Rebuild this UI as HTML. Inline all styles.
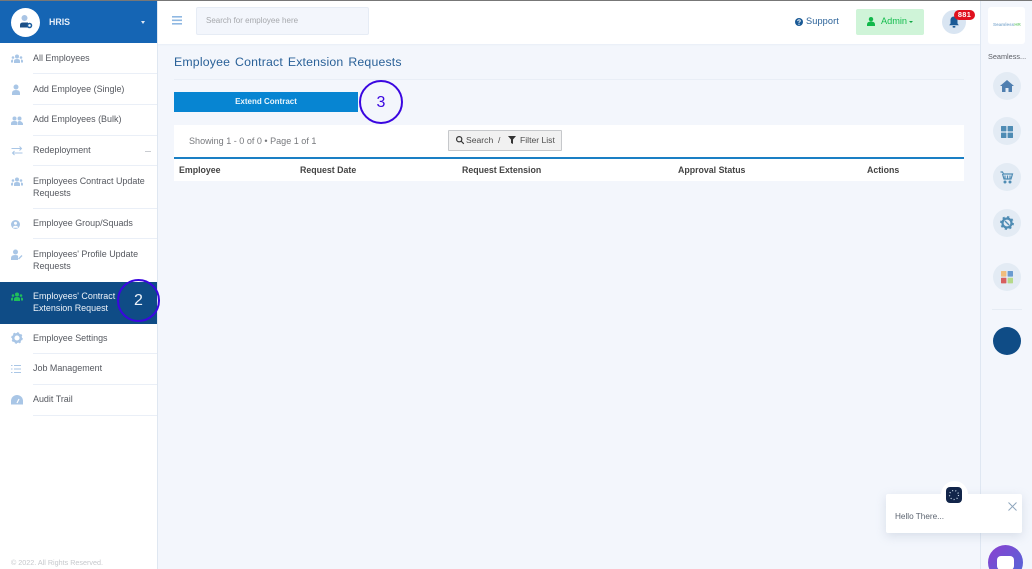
<!DOCTYPE html>
<html><head><meta charset="utf-8">
<style>
html,body{margin:0;padding:0;width:1032px;height:569px;overflow:hidden;background:#f3f6fc}
#w{position:absolute;left:0;top:0;width:1032px;height:569px;overflow:hidden;background:#f3f6fc;font-family:"Liberation Sans",sans-serif;color:#555;filter:blur(.3px)}
.a{position:absolute;white-space:nowrap}
.m{position:absolute;left:33px;font-size:8.950px;line-height:12px;color:#55585f;white-space:nowrap}
.l{position:absolute;left:33px;width:124px;height:1px;background:#eaeff7}
svg{position:absolute;overflow:visible}
.c{position:absolute;left:993px;width:28px;height:28px;border-radius:50%;background:#e3ebf4}
.th{position:absolute;top:164px;font-size:8.800px;font-weight:bold;color:#444;line-height:12px;white-space:nowrap}
</style></head><body><div id="w">
<!-- header -->
<div class="a" style="left:157px;top:1px;width:823px;height:43px;background:#fff;box-shadow:0 1px 2px #e8edf5"></div>
<div class="a" style="left:0;top:0;width:1032px;height:1px;background:#777"></div>
<!-- sidebar -->
<div class="a" style="left:0;top:1px;width:157px;height:568px;background:#fff;border-right:1px solid #dfe7f1"></div>
<div class="a" style="left:0;top:1px;width:157px;height:42px;background:#1565b4"></div>
<div class="a" style="left:11px;top:8px;width:29px;height:29px;border-radius:50%;background:#fff"></div>
<svg style="left:11px;top:8px" width="29" height="29"><circle cx="13.500" cy="10" r="3" fill="#a9c4e4"/><path d="M9 19.500v-2.500q0-2.500 3-2.500h5v5z" fill="#1c4f86"/><circle cx="18.500" cy="17.500" r="2" fill="none" stroke="#1c5d9e" stroke-width="1.500"/></svg>
<div class="a" style="left:49px;top:16px;font-size:8.800px;line-height:12px;font-weight:bold;color:#e6eef8">HRIS</div>
<div class="a" style="left:141px;top:21px;width:0;height:0;border:2.500px solid transparent;border-top:3px solid #dfe8f3"></div>

<div class="m" style="top:52px">All Employees</div><div class="l" style="top:73px"></div>
<div class="m" style="top:83px">Add Employee (Single)</div><div class="l" style="top:104px"></div>
<div class="m" style="top:113px">Add Employees (Bulk)</div><div class="l" style="top:135px"></div>
<div class="m" style="top:144px">Redeployment</div><div class="l" style="top:165px"></div>
<div class="a" style="left:145px;top:151px;width:6px;height:1px;background:#c9ccd1"></div>
<div class="m" style="top:175px">Employees Contract Update<br>Requests</div><div class="l" style="top:208px"></div>
<div class="m" style="top:217px">Employee Group/Squads</div><div class="l" style="top:238px"></div>
<div class="m" style="top:248px">Employees' Profile Update<br>Requests</div>
<div class="a" style="left:0;top:282px;width:157px;height:42px;background:#0f4c86"></div>
<div class="m" style="top:290px;color:#eef3f9">Employees' Contract<br>Extension Request</div>
<div class="m" style="top:332px">Employee Settings</div><div class="l" style="top:353px"></div>
<div class="m" style="top:362px">Job Management</div><div class="l" style="top:384px"></div>
<div class="m" style="top:393px">Audit Trail</div><div class="l" style="top:415px"></div>

<!-- sidebar icons -->
<svg style="left:11px;top:53px" width="12" height="12" fill="#a9c6e6"><circle cx="6" cy="3.500" r="2"/><circle cx="2" cy="4.500" r="1.300"/><circle cx="10" cy="4.500" r="1.300"/><path d="M3 10v-2q0-2 3-2t3 2v2zM0 9.500v-1.500q0-1.500 2-1.500v3zM12 9.500v-1.500q0-1.500-2-1.500v3z"/></svg>
<svg style="left:11px;top:84px" width="12" height="12" fill="#a9c6e6"><circle cx="5" cy="3" r="2.500"/><path d="M1 11v-2q0-3 4-3t4 3v2z"/></svg>
<svg style="left:11px;top:115px" width="12" height="12" fill="#a9c6e6"><circle cx="3.500" cy="3.500" r="2"/><circle cx="8.500" cy="3.500" r="2"/><path d="M0 10v-1.500q0-2.500 3.500-2.500t2.500 2.500v1.500zM6.500 10v-1.500q0-2.500 2-2.500t3.500 2.500v1.500z"/></svg>
<svg style="left:11px;top:145px" width="12" height="12" fill="none" stroke="#a9c6e6" stroke-width="1"><path d="M0.500 3.500h10M8.500 1.500l2 2-2 2M11.500 8h-10M3.500 6l-2 2 2 2"/></svg>
<svg style="left:11px;top:176px" width="12" height="12" fill="#a9c6e6"><circle cx="6" cy="3.500" r="2"/><circle cx="2" cy="4.500" r="1.300"/><circle cx="10" cy="4.500" r="1.300"/><path d="M3 10v-2q0-2 3-2t3 2v2zM0 9.500v-1.500q0-1.500 2-1.500v3zM12 9.500v-1.500q0-1.500-2-1.500v3z"/></svg>
<svg style="left:11px;top:219px" width="10" height="11"><circle cx="4.500" cy="5.500" r="4.500" fill="#a9c6e6"/><circle cx="4.500" cy="4.200" r="1.500" fill="#fff"/><path d="M2 7.800q2.500-2 5 0v1h-5z" fill="#fff"/></svg>
<svg style="left:11px;top:249px" width="12" height="12" fill="#a9c6e6"><circle cx="4.500" cy="3" r="2.500"/><path d="M0 11v-2q0-3 4-3t3 2v3z"/><path d="M7.500 10l3.500-3.500" stroke="#a9c6e6" stroke-width="1.300"/></svg>
<svg style="left:11px;top:291px" width="12" height="12" fill="#1fbf5a"><circle cx="6" cy="3.500" r="2"/><circle cx="2" cy="4.500" r="1.300"/><circle cx="10" cy="4.500" r="1.300"/><path d="M3 10v-2q0-2 3-2t3 2v2zM0 9.500v-1.500q0-1.500 2-1.500v3zM12 9.500v-1.500q0-1.500-2-1.500v3z"/></svg>
<svg style="left:11px;top:332px" width="12" height="12"><circle cx="6" cy="6" r="3.800" fill="none" stroke="#a9c6e6" stroke-width="2.500"/><circle cx="6" cy="6" r="5" fill="none" stroke="#a9c6e6" stroke-width="1.500" stroke-dasharray="2 1.900"/></svg>
<svg style="left:11px;top:364px" width="10" height="10" fill="none" stroke="#a9c6e6" stroke-width="1"><path d="M3 1.500h7M3 5h7M3 8.500h7M0 1.500h1.500M0 5h1.500M0 8.500h1.500"/></svg>
<svg style="left:11px;top:395px" width="12" height="10"><path d="M0 9.500v-3.500a6 6 0 0 1 12 0v3.500z" fill="#a9c6e6"/><path d="M6 8l2-4" stroke="#fff" stroke-width="1.200"/></svg>
<div class="a" style="left:11px;top:558px;font-size:7.200px;line-height:10px;color:#c6c8cc">© 2022. All Rights Reserved.</div>

<!-- annotation 2 -->
<div class="a" style="left:117px;top:279px;width:39px;height:39px;border:2.500px solid #3a06e0;border-radius:50%;text-align:center;line-height:40px;font-size:16px;color:#eef3f9">2</div>

<!-- top bar content -->
<svg style="left:172px;top:16px" width="10" height="9" fill="#8fb8e2"><rect width="10" height="1.600"/><rect y="3.500" width="10" height="1.600"/><rect y="7" width="10" height="1.600"/></svg>
<div class="a" style="left:196px;top:7px;width:171px;height:26px;background:#f3f6fc;border:1px solid #e6ecf5;border-radius:2px"></div>
<div class="a" style="left:206px;top:15px;font-size:8px;line-height:12px;color:#a6a8ac">Search for employee here</div>
<svg style="left:795px;top:18px" width="8" height="8"><circle cx="4" cy="4" r="4" fill="#1a5a96"/><path d="M2.700 3.100q0-1.300 1.300-1.300t1.300 1.200q0 .7-1.300 1.300v.5" fill="none" stroke="#fff" stroke-width=".9"/><circle cx="4" cy="6.200" r=".6" fill="#fff"/></svg>
<div class="a" style="left:806px;top:15px;font-size:9.200px;line-height:12px;color:#2a6198;letter-spacing:.1px">Support</div>
<div class="a" style="left:856px;top:9px;width:68px;height:26px;background:#cff4d8;border-radius:2px"></div>
<svg style="left:867px;top:17px" width="8" height="9" fill="#10b84a"><circle cx="4" cy="2.200" r="2.200"/><path d="M0 9v-1.500q0-3 4-3t4 3v1.500z"/></svg>
<div class="a" style="left:881px;top:15px;font-size:9.200px;line-height:12px;color:#12bc4c">Admin</div>
<div class="a" style="left:909px;top:21px;width:0;height:0;border:2px solid transparent;border-top:2.500px solid #12a845"></div>
<div class="a" style="left:942px;top:10px;width:24px;height:24px;border-radius:50%;background:#d9e5f2"></div>
<svg style="left:949px;top:16px" width="10" height="12" fill="#1a5a96"><path d="M5 0.500q3.500 0 3.500 4v3l1.300 1.800h-9.600l1.300-1.800v-3q0-4 3.500-4z"/><rect x="3.500" y="10" width="3" height="1.600" rx=".8"/></svg>
<div class="a" style="left:954px;top:10px;width:21px;height:10px;border-radius:5px;background:#e0101e;color:#fff;font-size:7.400px;font-weight:bold;line-height:10px;text-align:center;letter-spacing:.3px">881</div>

<!-- right rail -->
<div class="a" style="left:980px;top:1px;width:1px;height:568px;background:#dfe7f2"></div>
<div class="a" style="left:988px;top:7px;width:37px;height:37px;background:#fff;border-radius:3px"></div>
<div class="a" style="left:993px;top:22px;font-size:4.600px;line-height:6px;color:#8fb4d4;font-weight:bold">Seamless<span style="color:#8bd48e">HR</span></div>
<div class="a" style="left:988px;top:51px;font-size:7.300px;line-height:12px;color:#5c5f66">Seamless...</div>
<div class="c" style="top:72px"></div>
<svg style="left:1000px;top:80px" width="14" height="12" fill="#4f7fb0"><path d="M7 0l7 6h-2v6h-3.500v-4h-3v4h-3.500v-6h-2z"/></svg>
<div class="c" style="top:117px"></div>
<svg style="left:1001px;top:126px" width="12" height="12" fill="#4f8cb4"><rect width="5.400" height="5.400" rx=".5"/><rect x="6.600" width="5.400" height="5.400" rx=".5"/><rect y="6.600" width="5.400" height="5.400" rx=".5"/><rect x="6.600" y="6.600" width="5.400" height="5.400" rx=".5"/></svg>
<div class="c" style="top:163px"></div>
<svg style="left:1000px;top:171px" width="13" height="13" fill="none" stroke="#4f8cb4" stroke-width="1.200"><path d="M0.500 1h2l1 2h9l-1.500 5h-7l-1.500-5"/><path d="M5 4.500v3M7.500 4.500v3M10 4.500v3"/><circle cx="5" cy="11" r=".9" fill="#4f8cb4"/><circle cx="10" cy="11" r=".9" fill="#4f8cb4"/></svg>
<div class="c" style="top:209px"></div>
<svg style="left:1000px;top:216px" width="14" height="14"><circle cx="7" cy="7" r="4.500" fill="none" stroke="#4f8cb4" stroke-width="2.200"/><circle cx="7" cy="7" r="6" fill="none" stroke="#4f8cb4" stroke-width="1.800" stroke-dasharray="2.200 2.500"/><path d="M5 5l4 4" stroke="#4f8cb4" stroke-width="1.300"/></svg>
<div class="c" style="top:263px"></div>
<svg style="left:1001px;top:271px" width="12" height="13"><rect width="5.400" height="5.600" rx=".6" fill="#f0bd7c"/><rect x="6.600" width="5.400" height="5.600" rx=".6" fill="#6a9bd0"/><rect y="6.800" width="5.400" height="5.600" rx=".6" fill="#d75f5f"/><rect x="6.600" y="6.800" width="5.400" height="5.600" rx=".6" fill="#b5d98a"/></svg>
<div class="a" style="left:992px;top:309px;width:30px;height:1px;background:#e6ecf4"></div>
<div class="c" style="top:327px;background:#0f4c86"></div>

<!-- main -->
<div class="a" style="left:174px;top:54px;font-size:12.300px;line-height:16px;color:#2a6198;letter-spacing:.18px;word-spacing:1.300px">Employee Contract Extension Requests</div>
<div class="a" style="left:174px;top:79px;width:790px;height:1px;background:#e9eef6"></div>
<div class="a" style="left:174px;top:92px;width:184px;height:20px;background:#0785d2;color:#e9f4fb;font-size:8px;font-weight:bold;line-height:19px;text-align:center">Extend Contract</div>
<div class="a" style="left:359px;top:80px;width:40px;height:40px;border:2.500px solid #3a06e0;border-radius:50%;text-align:center;line-height:41px;font-size:16px;color:#3a06e0">3</div>

<div class="a" style="left:174px;top:125px;width:790px;height:32px;background:#fff"></div>
<div class="a" style="left:174px;top:157px;width:790px;height:2px;background:#1a7fc4"></div>
<div class="a" style="left:174px;top:159px;width:790px;height:22px;background:#fff"></div>
<div class="a" style="left:189px;top:135px;font-size:9.050px;line-height:12px;color:#77797d">Showing 1 - 0 of 0 • Page 1 of 1</div>
<div class="a" style="left:448px;top:130px;width:112px;height:19px;background:#f1f1f1;border:1px solid #c6c8cb;border-radius:1px"></div>
<svg style="left:456px;top:136px" width="8" height="8" fill="none" stroke="#333" stroke-width="1.200"><circle cx="3.200" cy="3.200" r="2.600"/><path d="M5 5l2.800 2.800"/></svg>
<div class="a" style="left:466px;top:134px;font-size:8.600px;line-height:12px;color:#4c4c4c">Search</div>
<div class="a" style="left:498px;top:134px;font-size:8.600px;line-height:12px;color:#4c4c4c">/</div>
<svg style="left:508px;top:136px" width="8" height="8" fill="#333"><path d="M0 0h8l-3 3.500v4.500l-2-1v-3.500z"/></svg>
<div class="a" style="left:520px;top:134px;font-size:8.600px;line-height:12px;color:#4c4c4c">Filter List</div>
<div class="th" style="left:179px">Employee</div>
<div class="th" style="left:300px">Request Date</div>
<div class="th" style="left:462px">Request Extension</div>
<div class="th" style="left:678px">Approval Status</div>
<div class="th" style="left:867px">Actions</div>

<!-- chat -->
<div class="a" style="left:886px;top:494px;width:136px;height:39px;background:#fff;border-radius:2px;box-shadow:0 3px 10px rgba(150,165,190,.3)"></div>
<div class="a" style="left:941px;top:481px;width:27px;height:27px;border-radius:50%;background:#fff"></div>
<div class="a" style="left:946px;top:487px;width:16px;height:16px;border-radius:4px;background:#12254a"></div>
<svg style="left:946px;top:487px" width="16" height="16"><circle cx="8" cy="8" r="4.500" fill="none" stroke="#cfe0f0" stroke-width="1.200" stroke-dasharray="1 2.200"/></svg>
<svg style="left:1008px;top:502px" width="9" height="9" fill="none" stroke="#8fa6bd" stroke-width="1"><path d="M.5.500l8 8M8.500.500l-8 8"/></svg>
<div class="a" style="left:895px;top:511px;font-size:8.200px;line-height:12px;color:#5c6470">Hello There...</div>
<div class="a" style="left:988px;top:545px;width:35px;height:35px;border-radius:50%;background:linear-gradient(135deg,#8b3fd0,#4f6bd8)"></div>
<div class="a" style="left:997px;top:556px;width:17px;height:14px;border-radius:4px;background:#fff"></div>
</div></body></html>
